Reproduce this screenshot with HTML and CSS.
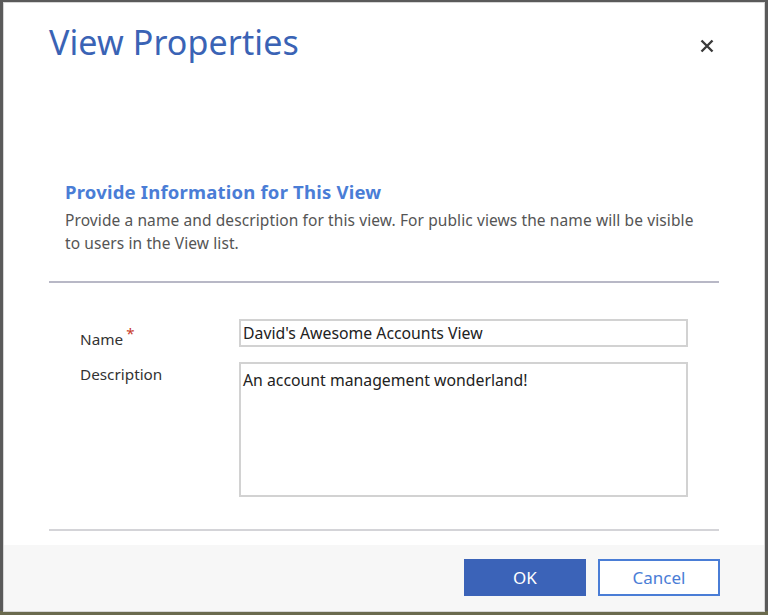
FILE: index.html
```html
<!DOCTYPE html>
<html lang="en">
<head>
<meta charset="utf-8">
<title>View Properties</title>
<link rel="stylesheet" href="styles.css">
</head>
<body>
<div class="dialog">
  <div class="header">
    <h1 class="title">View Properties</h1>
    <button class="close" aria-label="Close">
      <svg width="14" height="14" viewBox="0 0 14 14"><path d="M1.5 1.5 L12.5 12.5 M12.5 1.5 L1.5 12.5" stroke="#3a3a3a" stroke-width="2.4" fill="none"/></svg>
    </button>
  </div>
  <div class="intro">
    <h2 class="subtitle">Provide Information for This View</h2>
    <p class="desc">Provide a name and description for this view. For public views the name will be visible to users in the View list.</p>
  </div>
  <div class="divider strong"></div>
  <div class="form">
    <div class="row">
      <label class="label">Name<span class="req">*</span></label>
      <input class="input" type="text" value="David's Awesome Accounts View">
    </div>
    <div class="row">
      <label class="label">Description</label>
      <textarea class="textarea">An account management wonderland!</textarea>
    </div>
  </div>
  <div class="divider light"></div>
  <div class="footer">
    <button class="btn primary">OK</button>
    <button class="btn secondary">Cancel</button>
  </div>
</div>
</body>
</html>
```
FILE: styles.css
```css
html, body {
  margin: 0;
  padding: 0;
  height: 615px;
  overflow: hidden;
}
body {
  background: linear-gradient(to bottom, #5a5a5a 0, #5a5a5a 611px, #6a6a4e 611px);
  font-family: "Noto Sans", "Open Sans", sans-serif;
  padding: 2px 3px 3px 3px;
  box-sizing: border-box;
}
.dialog {
  background: #fff;
  height: 610px;
  box-sizing: border-box;
  border: 1px solid #d6d6d6;
  display: flex;
  flex-direction: column;
}
.header {
  display: flex;
  justify-content: space-between;
  align-items: flex-start;
  padding: 17px 50px 0 45px;
  height: 130px;
  box-sizing: border-box;
}
.title {
  margin: 0;
  font-weight: 400;
  font-size: 34px;
  line-height: 44px;
  color: #3a63b5;
  letter-spacing: 0.1px;
}
.close {
  background: none;
  border: 0;
  padding: 0;
  margin-top: 19px;
  width: 14px;
  height: 14px;
  display: flex;
}
.intro {
  padding: 47px 66px 0 61px;
}
.subtitle {
  margin: 0;
  font-size: 18.5px;
  font-weight: 700;
  line-height: 24px;
  color: #4a7dd6;
  letter-spacing: 0.2px;
}
.desc {
  margin: 5px 0 0 0;
  font-size: 15.5px;
  line-height: 23px;
  color: #555;
  letter-spacing: 0.1px;
}
.divider {
  margin: 0 45px 0 45px;
  height: 2px;
}
.divider.strong {
  background: #b8b8c6;
  margin-top: 26px;
}
.divider.light {
  background: #d4d4d8;
  margin-top: 32px;
}
.form {
  padding: 36px 76px 0 76px;
  display: flex;
  flex-direction: column;
  gap: 13px;
}
.row {
  display: flex;
  align-items: flex-start;
}
.label {
  width: 159px;
  flex: none;
  font-size: 15.3px;
  line-height: 20px;
  color: #333;
  padding-top: 10px;
}
.row + .row .label {
  padding-top: 2px;
}
.req {
  color: #c83a2a;
  font-size: 15px;
  position: relative;
  top: -6px;
  margin-left: 3px;
}
.input, .textarea {
  box-sizing: border-box;
  width: 450px;
  border: 2px solid #d2d2d2;
  font-family: inherit;
  font-size: 15.8px;
  color: #222;
  padding: 1px 2px;
  margin: 0;
  outline: none;
  background: #fff;
}
.input {
  height: 28px;
}
.textarea {
  height: 135px;
  resize: none;
  padding: 6px 2px;
  line-height: 20px;
}
.footer {
  margin-top: 14px;
  flex: 1;
  background: #f7f7f7;
  display: flex;
  justify-content: flex-end;
  align-items: flex-start;
  padding: 14px 44px 0 0;
  gap: 12px;
}
.btn {
  width: 122px;
  height: 37px;
  box-sizing: border-box;
  font-family: inherit;
  font-size: 17px;
  cursor: pointer;
}
.primary {
  background: #3b63b8;
  border: 1px solid #3b63b8;
  color: #fff;
}
.secondary {
  background: #fff;
  border: 2px solid #4a7dd6;
  color: #4a7dd6;
}
```
